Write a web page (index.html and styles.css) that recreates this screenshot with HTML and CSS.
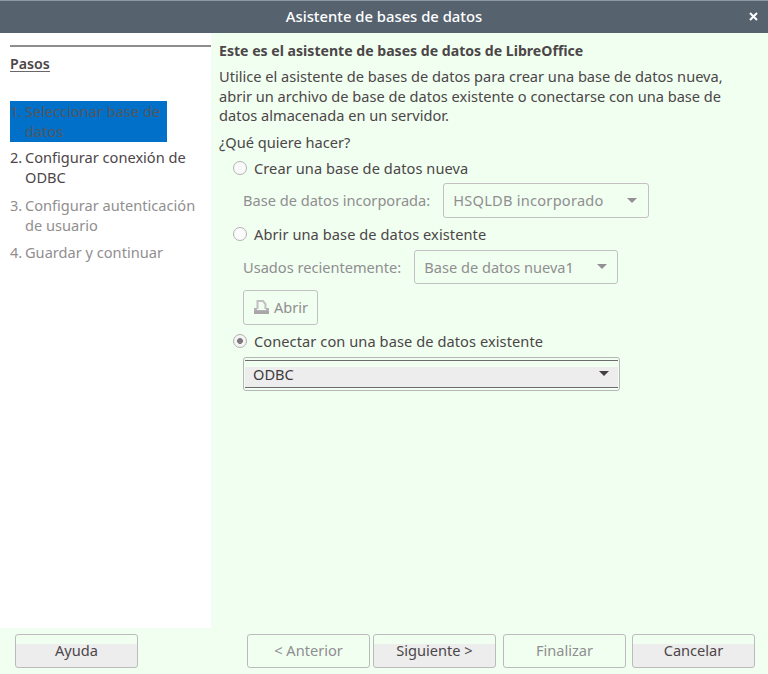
FILE: index.html
```html
<!DOCTYPE html>
<html lang="es">
<head>
<meta charset="utf-8">
<title>Asistente de bases de datos</title>
<link rel="stylesheet" href="styles.css">
</head>
<body>
<div class="window">
  <header class="titlebar">
    <span class="title">Asistente de bases de datos</span>
    <svg class="close" width="9" height="9" viewBox="0 0 9 9"><path d="M1 1l7 7M8 1l-7 7" stroke="#fff" stroke-width="2"/></svg>
  </header>
  <div class="content">
    <aside class="sidebar">
      <div class="rule"></div>
      <div class="steps-title">Pasos</div>
      <ol class="steps">
        <li class="step selected"><span class="num">1.</span><span>Seleccionar base de datos</span></li>
        <li class="step"><span class="num">2.</span><span>Configurar conexión de ODBC</span></li>
        <li class="step off"><span class="num">3.</span><span>Configurar autenticación de usuario</span></li>
        <li class="step off"><span class="num">4.</span><span>Guardar y continuar</span></li>
      </ol>
    </aside>
    <main class="main">
      <h1 class="heading">Este es el asistente de bases de datos de LibreOffice</h1>
      <p class="intro">Utilice el asistente de bases de datos para crear una base de datos nueva, abrir un archivo de base de datos existente o conectarse con una base de datos almacenada en un servidor.</p>
      <div class="question">¿Qué quiere hacer?</div>
      <div class="radio-row"><span class="radio"></span>Crear una base de datos nueva</div>
      <div class="field-row first-field">
        <span class="field-label">Base de datos incorporada:</span>
        <div class="select select-a"><span class="wide">HSQLDB incorporado</span><i class="arrow"></i></div>
      </div>
      <div class="radio-row"><span class="radio"></span>Abrir una base de datos existente</div>
      <div class="field-row">
        <span class="field-label">Usados recientemente:</span>
        <div class="select select-b"><span>Base de datos nueva1</span><i class="arrow"></i></div>
      </div>
      <div class="btn-abrir">
        <svg width="17" height="16" viewBox="0 0 17 16"><path d="M1 9h3v2h9V9h3v6H1z" fill="#b5b0b5"/><path d="M4.5 10V2h5.5l2.5 3v5" fill="none" stroke="#c2bec2" stroke-width="2"/><path d="M1 12h15v3H1z" fill="#aaa5aa"/></svg>
        <span>Abrir</span>
      </div>
      <div class="radio-row checked-row"><span class="radio checked"></span>Conectar con una base de datos existente</div>
      <div class="select select-c"><div class="select-c-inner"><span>ODBC</span><i class="arrow dark"></i></div></div>
    </main>
  </div>
  <footer class="footer">
    <button class="btn">Ayuda</button>
    <div class="footer-right">
      <button class="btn off">&lt; Anterior</button>
      <button class="btn next">Siguiente &gt;</button>
      <button class="btn off finish">Finalizar</button>
      <button class="btn cancel">Cancelar</button>
    </div>
  </footer>
</div>
</body>
</html>
```
FILE: styles.css
```css
* { box-sizing: border-box; }
html, body { margin: 0; padding: 0; }
body {
  width: 768px;
  height: 674px;
  overflow: hidden;
  font-family: "Noto Sans", sans-serif;
  font-size: 14.6px;
  color: #4c4648;
  background: #f0fff0;
}
.window { display: flex; flex-direction: column; height: 674px; }
.titlebar {
  height: 33px;
  flex: none;
  background: #56636f;
  border-top: 1px solid #8d99a3;
  padding-bottom: 3px;
  display: flex;
  align-items: center;
  justify-content: center;
  position: relative;
}
.title { color: #fff; font-weight: 500; font-size: 14.8px; }
.close { position: absolute; right: 10px; top: 11px; }
.content { flex: none; height: 595px; display: flex; }
.sidebar { width: 211px; flex: none; background: #fff; padding: 12px 0 0 10px; }
.rule { height: 2px; background: #8f8d8f; }
.steps-title {
  margin-top: 7px;
  font-weight: 600;
  font-size: 14.2px;
  line-height: 19px;
  width: max-content;
  border-bottom: 1px solid #6b6668;
  height: 18px;
}
.steps { list-style: none; margin: 29px 0 0; padding: 0; }
.step { display: flex; width: 190px; line-height: 20px; margin-bottom: 7.6px; }
.num { width: 15px; flex: none; }
.step.selected {
  width: 157px;
  height: 41px;
  background: #0070c8;
  color: #53575e;
  margin-bottom: 5px;
}
.step.off { color: #918e90; }
.main { flex: 1; padding: 8px 0 0 8px; min-width: 0; }
.heading { margin: 0; font-size: 14.1px; font-weight: 700; line-height: 20px; color: #4c4648; }
.intro { margin: 6px 0 0; width: 525px; line-height: 19.6px; }
.question { margin-top: 6px; line-height: 20px; }
.radio-row { display: flex; align-items: center; height: 20px; margin: 6px 0 0 14px; letter-spacing: .08px; }
.radio {
  width: 14px;
  height: 14px;
  border-radius: 50%;
  border: 1px solid #b3b0b3;
  background: #fbfbfb;
  margin-right: 7px;
  flex: none;
}
.radio.checked { background: radial-gradient(circle, #7c787b 0 2.6px, #f4f4f4 3.2px); }
.field-row { display: flex; align-items: center; margin: 6px 0 0 24px; color: #918e90; }
.field-label { margin-right: 13px; }
.first-field { margin-top: 5px; }
.select {
  height: 34px;
  border: 1px solid #c3c0c3;
  border-radius: 3px;
  display: flex;
  align-items: center;
  justify-content: space-between;
}
.select-a { width: 206px; height: 35px; padding: 0 11px 0 9px; }
.select-b { width: 204px; padding: 0 10px 0 9px; }
.wide { letter-spacing: .25px; }
.arrow {
  width: 0;
  height: 0;
  border-left: 5px solid transparent;
  border-right: 5px solid transparent;
  border-top: 5px solid #948f92;
}
.arrow.dark { border-top-color: #454043; }
.btn-abrir {
  margin: 6px 0 0 24px;
  width: 75px;
  height: 35px;
  border: 1px solid #c3c0c3;
  border-radius: 3px;
  display: flex;
  align-items: center;
  justify-content: center;
  gap: 4px;
  color: #918e90;
}
.checked-row { margin-top: 6px; }
.select-c {
  margin: 6px 0 0 24px;
  width: 377px;
  height: 34px;
  padding: 2px 1px;
  display: block;
  border-color: #b8b5b8;
}
.select-c-inner {
  height: 28px;
  border-top: 1px solid #6e6a6d;
  border-bottom: 1px solid #6e6a6d;
  background: linear-gradient(#f0fff0 0 6px, #ededed 6px);
  display: flex;
  align-items: center;
  justify-content: space-between;
  padding: 0 9px 0 8px;
  color: #3f3a3d;
}
.footer {
  flex: 1;
  display: flex;
  justify-content: space-between;
  padding: 6px 13px 0 15px;
}
.footer-right { display: flex; }
.btn {
  width: 123px;
  height: 34px;
  border: 1px solid #bdbabd;
  border-radius: 3px;
  background: linear-gradient(#f0fff0 0 9px, #ededed 9px);
  font: inherit;
  color: #4c4648;
  padding: 0 0 2px;
}
.btn.off { background: transparent; color: #918e90; }
.next { margin-left: 3px; }
.finish { margin-left: 7px; }
.cancel { margin-left: 6px; }
```
